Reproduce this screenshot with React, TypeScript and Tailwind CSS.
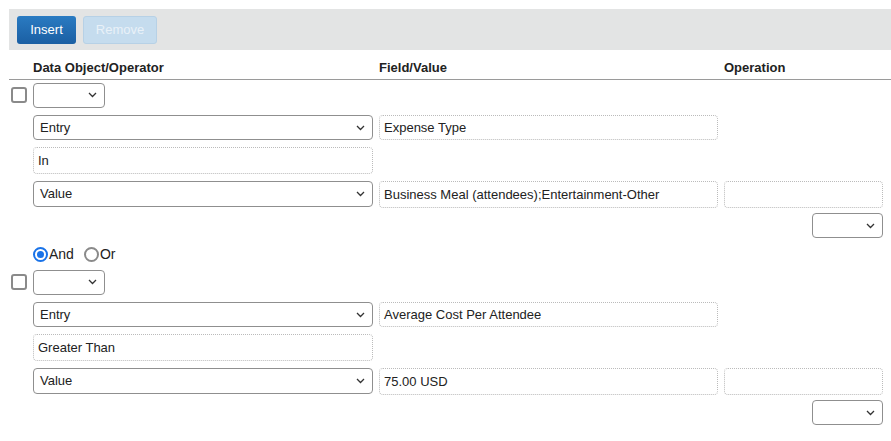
import React from "react";

const F = { fontFamily: '"Liberation Sans", Arial, sans-serif' };

function Chev() {
  return (
    <svg width="9" height="6" viewBox="0 0 9 6" className="absolute right-[7px] top-1/2 -translate-y-1/2">
      <path d="M1 1l3.5 3.5L8 1" fill="none" stroke="#333" strokeWidth="1.3" />
    </svg>
  );
}

function Sel({ w, h = 26, text = "" }: { w: number; h?: number; text?: string }) {
  return (
    <div className="relative flex items-center rounded-[4px] border border-[#8f8f8f] bg-white pl-[6px] text-[13px] text-[#222]" style={{ width: w, height: h }}>
      {text}
      <Chev />
    </div>
  );
}

function Inp({ w, h = 27, text = "" }: { w: number; h?: number; text?: string }) {
  return (
    <div className="flex items-center rounded-[4px] border border-dotted border-[#bbb] bg-white pl-[4px] text-[13px] text-[#222]" style={{ width: w, height: h }}>
      {text}
    </div>
  );
}

function Group({ field, op, value }: { field: string; op: string; value: string }) {
  return (
    <div className="flex flex-col">
      <div className="flex items-center h-[24px]">
        <div className="w-[24px] pl-[2px]">
          <div className="h-[16px] w-[16px] rounded-[3px] border-2 border-[#8a8a8a] bg-white" />
        </div>
        <Sel w={72} h={25} />
      </div>
      <div className="mt-[8px] flex gap-[6px] pl-[24px]">
        <Sel w={340} h={25} text="Entry" />
        <Inp w={339} h={25} text={field} />
      </div>
      <div className="mt-[7px] pl-[24px]">
        <Inp w={340} text={op} />
      </div>
      <div className="mt-[7px] flex gap-[6px] pl-[24px]">
        <Sel w={340} h={26} text="Value" />
        <Inp w={339} h={27} text={value} />
        <Inp w={159} h={27} />
      </div>
      <div className="mt-[5px] flex justify-end pr-[8px]">
        <Sel w={71} h={25} />
      </div>
    </div>
  );
}

export default function App() {
  return (
    <div className="h-[441px] w-[891px] bg-white pl-[9px] pt-[9px]" style={F}>
      <div className="flex h-[41px] items-center gap-[7px] bg-[#e3e4e4] pl-[8px]">
        <div className="flex h-[28px] w-[59px] items-center justify-center rounded-[3px] bg-gradient-to-b from-[#2a7bc2] to-[#1b5fa3] text-[13px] text-white">Insert</div>
        <div className="flex h-[28px] w-[74px] items-center justify-center rounded-[3px] border border-[#b7d1e6] bg-[#c5dcee] text-[13px] text-[#e9f1f8]">Remove</div>
      </div>
      <div className="flex h-[30px] items-end border-b border-[#9a9a9a] pb-[2px] text-[13px] font-bold text-[#222]">
        <div className="w-[370px] pl-[24px]">Data Object/Operator</div>
        <div className="w-[345px]">Field/Value</div>
        <div>Operation</div>
      </div>
      <div className="pt-[3px]">
        <Group field="Expense Type" op="In" value="Business Meal (attendees);Entertainment-Other" />
        <div className="mt-[6px] flex h-[20px] items-center gap-[10px] pl-[24px] text-[14px] text-[#222]">
          <div className="flex items-center gap-[1px]">
            <div className="flex h-[15px] w-[15px] items-center justify-center rounded-full border-2 border-[#1a73e8]"><div className="h-[7px] w-[7px] rounded-full bg-[#1a73e8]" /></div>
            And
          </div>
          <div className="flex items-center gap-[1px]">
            <div className="h-[15px] w-[15px] rounded-full border-2 border-[#8a8a8a]" />
            Or
          </div>
        </div>
        <div className="mt-[6px]">
          <Group field="Average Cost Per Attendee" op="Greater Than" value="75.00 USD" />
        </div>
      </div>
    </div>
  );
}
